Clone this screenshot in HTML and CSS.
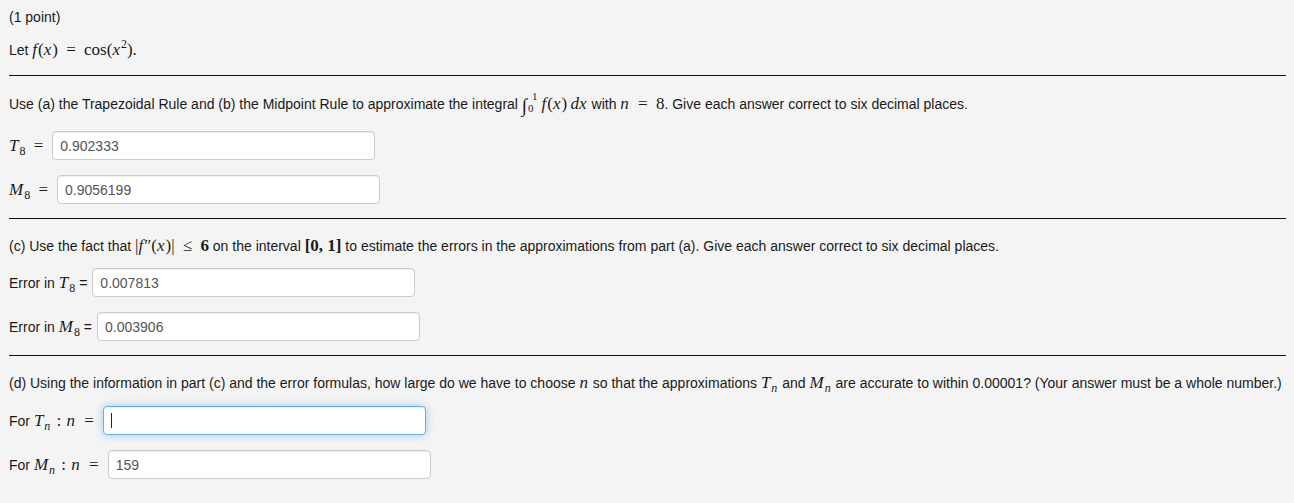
FILE: index.html
```html
<!DOCTYPE html>
<html>
  <head>
    <meta charset="UTF-8" />
    <title>Problem</title>
    <link rel="stylesheet" href="styles.css">
  </head>
  <body>
    <div class="problem">
      <p class="points">(1 point)</p>
      <p class="intro">Let <span class="math"><i>f</i>(<i>x</i>) <span class="op">=</span> cos(<i>x</i><sup>2</sup>).</span></p>

      <hr>

      <p class="prompt prompt-ab">
        Use (a) the Trapezoidal Rule and (b) the Midpoint Rule to approximate the integral
        <span class="math"><span class="integral">∫<span class="limits"><span class="upper">1</span><span class="lower">0</span></span></span><i>f</i>(<i>x</i>)&#8201;<i>dx</i></span>
        with <span class="math"><i>n</i> <span class="op">=</span> 8</span>. Give each answer correct to six decimal places.
      </p>

      <div class="answer-row first-ab">
        <label class="math"><i>T</i><sub>8</sub> <span class="op">=</span></label>
        <input class="answer" type="text" value="0.902333">
      </div>
      <div class="answer-row">
        <label class="math"><i>M</i><sub>8</sub> <span class="op">=</span></label>
        <input class="answer" type="text" value="0.9056199">
      </div>

      <hr class="rule-c">

      <p class="prompt">
        (c) Use the fact that <span class="math">|<i>f</i>″(<i>x</i>)| <span class="op">≤</span> <b>6</b></span>
        on the interval <span class="math"><b>[0, 1]</b></span> to estimate the errors in the approximations from part (a). Give each answer correct to six decimal places.
      </p>

      <div class="answer-row first-c">
        <label>Error in <span class="math"><i>T</i><sub>8</sub></span> =</label>
        <input class="answer" type="text" value="0.007813">
      </div>
      <div class="answer-row">
        <label>Error in <span class="math"><i>M</i><sub>8</sub></span> =</label>
        <input class="answer" type="text" value="0.003906">
      </div>

      <hr class="rule-d">

      <p class="prompt prompt-d">
        (d) Using the information in part (c) and the error formulas, how large do we have to choose
        <span class="math"><i>n</i></span> so that the approximations <span class="math"><i>T</i><sub><i>n</i></sub></span>
        and <span class="math"><i>M</i><sub><i>n</i></sub></span> are accurate to within 0.00001? (Your answer must be a whole number.)
      </p>

      <div class="answer-row first-d">
        <label>For <span class="math"><i>T</i><sub><i>n</i></sub> <span class="colon">:</span> <i>n</i> <span class="op">=</span></span></label>
        <span class="field">
          <input class="answer focused" type="text" value="">
          <span class="caret"></span>
        </span>
      </div>
      <div class="answer-row">
        <label>For <span class="math"><i>M</i><sub><i>n</i></sub> <span class="colon">:</span> <i>n</i> <span class="op">=</span></span></label>
        <input class="answer" type="text" value="159">
      </div>
    </div>
  </body>
</html>
```

FILE: styles.css
```css
:root {
  --bg-color: #f4f4f4;
  --text-color: #1a1a1a;
  --input-text: #555555;
  --input-border: #cccccc;
  --focus-border: #66afe9;
}

body {
  margin: 0;
  background-color: var(--bg-color);
  color: var(--text-color);
  font-family: "Liberation Sans", Arial, sans-serif;
  font-size: 14px;
  line-height: 20px;
}

.problem {
  padding: 7px 8px 8px 9px;
}

p {
  margin: 0;
}

.intro {
  margin-top: 13px;
}

hr {
  border: 0;
  border-top: 1px solid #111;
  margin: 15px 0 0;
}

.rule-c {
  margin-top: 14px;
}

.rule-d {
  margin-top: 14px;
}

.prompt {
  margin-top: 17px;
}

.prompt-ab {
  margin-top: 18px;
}

.prompt-d {
  white-space: nowrap;
}

/* math bits (stand-in for the MathJax output) */
.math {
  font-family: "Liberation Serif", "DejaVu Serif", serif;
  font-size: 17px;
  line-height: 1;
}

.math i {
  font-style: italic;
  margin-right: 1px;
}

.math b {
  font-weight: bold;
}

.math sup {
  font-size: 12px;
  vertical-align: 7px;
  line-height: 0;
}

.math sub {
  font-size: 12px;
  vertical-align: -4px;
  line-height: 0;
}

.op {
  margin: 0 4px;
}

.colon {
  margin: 0 1px;
}

.integral {
  display: inline-flex;
  align-items: center;
  font-size: 19px;
  font-style: normal;
  margin-right: 4px;
  vertical-align: -3px;
}

.limits {
  display: inline-flex;
  flex-direction: column;
  font-size: 11px;
  line-height: 10px;
  margin-left: 1px;
}

.upper {
  margin-top: -8px;
  margin-left: 4px;
}

.lower {
  margin-top: 2px;
}

/* answer rows */
.answer-row {
  display: flex;
  align-items: center;
  gap: 5px;
  height: 29px;
  margin-top: 15px;
}

.first-ab {
  margin-top: 16px;
}

.first-c {
  margin-top: 12px;
}

.first-d {
  margin-top: 13px;
}

.answer-row label {
  white-space: nowrap;
}

.answer {
  box-sizing: border-box;
  width: 323px;
  height: 29px;
  padding: 0 7px;
  border: 1px solid var(--input-border);
  border-radius: 4px;
  background-color: #fff;
  color: var(--input-text);
  font-family: "Liberation Sans", Arial, sans-serif;
  font-size: 14px;
  box-shadow: inset 0 1px 1px rgba(0, 0, 0, 0.075);
  outline: none;
}

.answer.focused {
  border-color: var(--focus-border);
  box-shadow: inset 0 1px 1px rgba(0, 0, 0, 0.075), 0 0 8px rgba(102, 175, 233, 0.6);
}

.field {
  position: relative;
  display: inline-flex;
}

.caret {
  position: absolute;
  left: 8px;
  top: 7px;
  width: 1px;
  height: 15px;
  background-color: #222;
}
```
